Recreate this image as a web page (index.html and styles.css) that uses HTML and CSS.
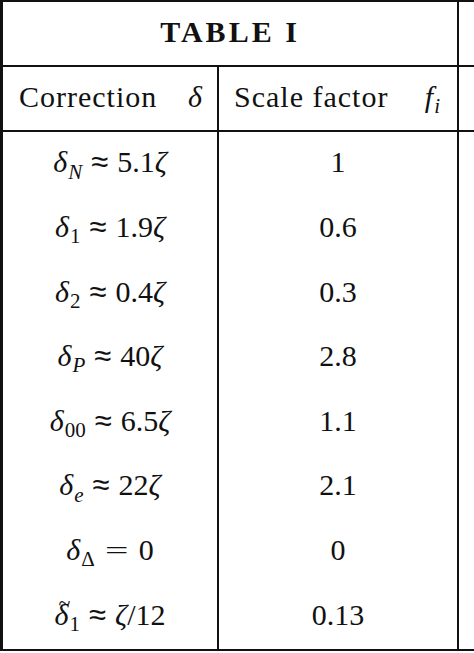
FILE: index.html
```html
<!DOCTYPE html>
<html>
<head>
<meta charset="utf-8">
<link rel="stylesheet" href="styles.css">
</head>
<body>
<div class="sheet">
  <div class="tbl">
    <div class="row title-row">
      <div class="cell title">TABLE I</div>
      <div class="cell extra"></div>
    </div>
    <div class="row head-row">
      <div class="cell c1 head"><span class="txt">Correction</span><span class="m">δ</span></div>
      <div class="cell c2 head head2"><span class="txt">Scale factor</span><span class="expr"><span class="m">f</span><sub class="sb si">i</sub></span></div>
      <div class="cell extra"></div>
    </div>
    <div class="body">
      <div class="row"><div class="cell c1"><span class="expr"><span class="m">δ</span><sub class="sb si">N</sub><span class="rel">≈</span>5.1<span class="m">ζ</span></span></div><div class="cell c2">1</div><div class="cell extra"></div></div>
      <div class="row"><div class="cell c1"><span class="expr"><span class="m">δ</span><sub class="sb">1</sub><span class="rel">≈</span>1.9<span class="m">ζ</span></span></div><div class="cell c2">0.6</div><div class="cell extra"></div></div>
      <div class="row"><div class="cell c1"><span class="expr"><span class="m">δ</span><sub class="sb">2</sub><span class="rel">≈</span>0.4<span class="m">ζ</span></span></div><div class="cell c2">0.3</div><div class="cell extra"></div></div>
      <div class="row"><div class="cell c1"><span class="expr"><span class="m">δ</span><sub class="sb si">P</sub><span class="rel">≈</span>40<span class="m">ζ</span></span></div><div class="cell c2">2.8</div><div class="cell extra"></div></div>
      <div class="row"><div class="cell c1"><span class="expr"><span class="m">δ</span><sub class="sb">00</sub><span class="rel">≈</span>6.5<span class="m">ζ</span></span></div><div class="cell c2">1.1</div><div class="cell extra"></div></div>
      <div class="row"><div class="cell c1"><span class="expr"><span class="m">δ</span><sub class="sb si">e</sub><span class="rel">≈</span>22<span class="m">ζ</span></span></div><div class="cell c2">2.1</div><div class="cell extra"></div></div>
      <div class="row"><div class="cell c1"><span class="expr"><span class="m">δ</span><sub class="sb">Δ</sub><span class="rel">=</span>0</span></div><div class="cell c2">0</div><div class="cell extra"></div></div>
      <div class="row"><div class="cell c1"><span class="expr"><span class="m tilde">δ</span><sub class="sb">1</sub><span class="rel">≈</span><span class="m">ζ</span>/12</span></div><div class="cell c2">0.13</div><div class="cell extra"></div></div>
    </div>
  </div>
</div>
</body>
</html>
```
FILE: styles.css
```css
html, body {
  margin: 0;
  padding: 0;
  background: #fff;
}

.sheet {
  width: 474px;
  height: 653px;
  overflow: hidden;
  font-family: "Liberation Serif", "Times New Roman", serif;
  font-size: 30px;
  color: #111;
}

.tbl {
  width: 560px;
  border-top: 2px solid #111;
  border-left: 3px solid #111;
  border-bottom: 2px solid #111;
}

.row {
  display: flex;
}

.cell {
  box-sizing: border-box;
  display: flex;
  align-items: center;
  justify-content: center;
  padding-bottom: 4px;
  line-height: 34px;
  white-space: nowrap;
}

.title-row {
  height: 63px;
}

.title {
  width: 454px;
  font-weight: bold;
  letter-spacing: 3px;
}

.extra {
  flex: 1;
  border-left: 2px solid #111;
}

.head-row {
  height: 63px;
  border-top: 2px solid #111;
}

.c1 {
  width: 214px;
}

.c2 {
  width: 240px;
  border-left: 2px solid #111;
}

.head {
  justify-content: space-between;
}

.c1.head {
  padding-left: 16px;
  padding-right: 15px;
}

.head2 {
  padding-left: 15px;
  padding-right: 17px;
}

.txt {
  letter-spacing: 1px;
}

.expr {
  display: inline-block;
  line-height: 34px;
}

.m {
  font-style: italic;
}

.sb {
  font-size: 0.7em;
  vertical-align: -0.3em;
  line-height: 0;
  margin-left: 1px;
}

.si {
  font-style: italic;
}

.rel {
  font-family: "DejaVu Sans", sans-serif;
  font-weight: 200;
  font-size: 31px;
  line-height: 0;
  margin: 0 9px;
}

.body {
  border-top: 2px solid #111;
}

.body .row {
  height: 64.625px;
}

.tilde {
  position: relative;
}

.tilde::after {
  content: "~";
  position: absolute;
  left: 4px;
  top: -12px;
  font-style: normal;
  font-size: 22px;
}
```
